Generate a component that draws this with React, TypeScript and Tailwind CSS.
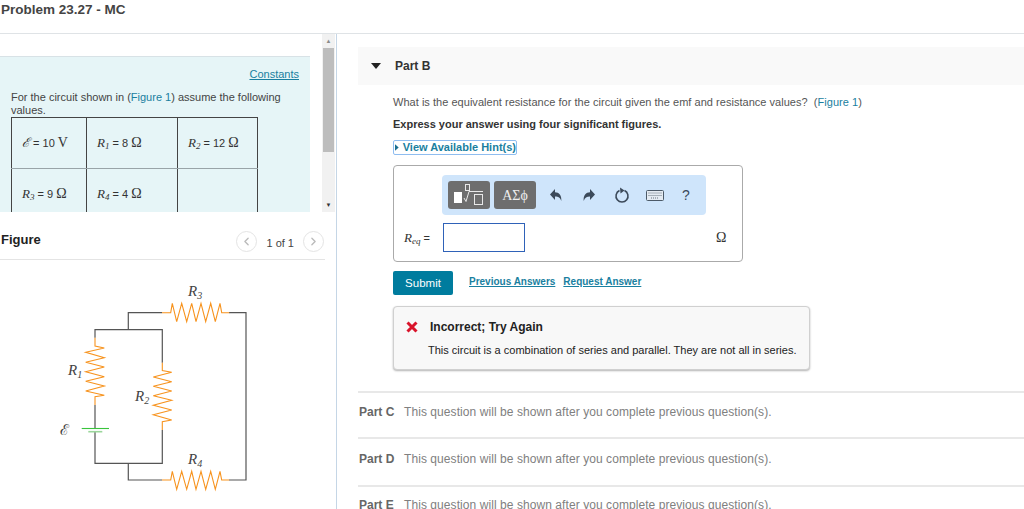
import React from 'react';
import { ChevronLeft, ChevronRight } from 'lucide-react';

const serif = "font-['Liberation_Serif',serif]";

const Sym = ({ name, sub }: { name: string; sub?: string }) => (
    <span className={`${serif} text-[13px] italic text-[#333]`}>
        {name}
        {sub && <sub className="text-[9px] leading-none">{sub}</sub>}
    </span>
);

const Cell = ({ name, sub, value, unit }: { name?: string; sub?: string; value?: string; unit?: string }) => (
    <td className="border border-[#444] pb-[2px] pl-[10px] align-middle text-[11px] text-[#333]">
        {name && (
            <>
                <Sym name={name} sub={sub} /> = {value} <span className={`${serif} text-[14px]`}>{unit}</span>
            </>
        )}
    </td>
);

const Circuit = () => (
    <svg width="336" height="249" viewBox="0 260 336 249" className="block">
        <g fill="none" stroke="#555" strokeWidth="1.2">
            <path d="M162 312.7H128.3V329.7M229 312.7H246V480H229M162 480H128.3V463.3" />
            <path d="M95 337.7V329.7H162.3V362.7M162.3 430V463.3H95V431.7M95 405V428.3" />
        </g>
        <g fill="none" stroke="#f7931e" strokeWidth="1.1">
            <path d="M162 312.7H170.7L172.3 303.3L176.7 321.7L181.7 303.3L186.7 321.7L191.7 303.3L196 321.7L201 303.3L205.7 321.7L210.7 303.3L215.3 321.7L220 303.3L221.7 312.7H229.3" />
            <path d="M162 480H170.7L172.3 471.3L176.7 489.3L181.7 471.3L186.7 489.3L191.7 471.3L196 489.3L201 471.3L205.7 489.3L210.7 471.3L215.3 489.3L220 471.3L221.7 480H229.3" />
            <path d="M95 337.7V346L104.3 348L85.7 352.3L104.3 357.7L85.7 362.3L104.3 367L85.7 371.7L104.3 376.7L85.7 381.3L104.3 386L85.7 391L104.3 395.3L95 396.7V405" />
            <path d="M162.3 362.7V370.5L171.7 372.3L153.3 377L171.7 381.7L153.3 386.3L171.7 391L153.3 395.7L171.7 400.3L153.3 405.3L171.7 410L153.3 414.7L171.7 420L162.3 421.7V430" />
        </g>
        <path d="M81.7 428.5H109" stroke="#39c43c" strokeWidth="1.1" fill="none" />
        <path d="M88.3 431.7H102.3" stroke="#9ad69b" strokeWidth="1.6" fill="none" />
        <g className={serif} fontSize="15" fill="#444" fontStyle="italic">
            <text x="188" y="296">R<tspan fontSize="10" dy="3">3</tspan></text>
            <text x="188" y="464">R<tspan fontSize="10" dy="3">4</tspan></text>
            <text x="68" y="375">R<tspan fontSize="10" dy="3">1</tspan></text>
            <text x="135" y="401">R<tspan fontSize="10" dy="3">2</tspan></text>
            <text x="60" y="435" fontSize="15" fontStyle="normal">ℰ</text>
        </g>
    </svg>
);

const Toolbar = () => (
    <div className="ml-[48px] mt-[9px] flex h-[40px] w-[264px] items-center rounded-[4px] bg-[#cfe5fb] pl-[6px]">
        <div className="flex h-[28px] w-[42px] items-center justify-center gap-[1px] rounded-[3px] bg-[#6e6e6e]">
            <div className="mt-[4px] h-[11px] w-[8px] bg-white" />
            <svg width="21" height="24" viewBox="0 0 21 24" fill="none" stroke="#e8e8e8" strokeWidth="1">
                <rect x="2.5" y="1.5" width="4" height="6" />
                <path d="M1 15L3 18.5L6 8.5H20" />
                <rect x="11.5" y="11.5" width="8" height="10" />
            </svg>
        </div>
        <div className={`${serif} ml-[4px] flex h-[28px] w-[42px] items-center justify-center rounded-[3px] bg-[#6e6e6e] text-[14px] text-[#eee]`}>
            ΑΣϕ
        </div>
        <svg className="ml-[13px]" width="14" height="14" viewBox="0 0 14 14" fill="#3c4a5a">
            <path d="M6 1V4.2C10 4.2 12.8 7 12.3 13C11 9.8 9.5 8.6 6 8.6V12L1 6.5Z" />
        </svg>
        <svg className="ml-[19px]" width="14" height="14" viewBox="0 0 14 14" fill="#3c4a5a">
            <path d="M8 1V4.2C4 4.2 1.2 7 1.7 13C3 9.8 4.5 8.6 8 8.6V12L13 6.5Z" />
        </svg>
        <svg className="ml-[18px]" width="16" height="16" viewBox="0 0 16 16" fill="none" stroke="#3c4a5a" strokeWidth="1.6">
            <path d="M5.5 3.6A6 6 0 1 0 10.5 3.6" />
            <path d="M6 0.5L10.5 3.4L6.5 6.5Z" fill="#3c4a5a" stroke="none" />
        </svg>
        <svg className="ml-[16px]" width="18" height="11" viewBox="0 0 18 11">
            <rect x="0.5" y="0.5" width="17" height="10" rx="1" fill="#e4ebf2" stroke="#4c5a68" />
            <path d="M2.5 3H15.5M2.5 5.5H15.5M5 8H13" stroke="#68747f" strokeWidth="1.2" strokeDasharray="1 1" />
        </svg>
        <span className="ml-[18px] text-[14px] text-[#3c4a5a]">?</span>
    </div>
);

const Locked = ({ part, className }: { part: string; className: string }) => (
    <div className={`flex border-t-2 border-[#e8e8e8] pl-[1px] text-[12px] ${className}`}>
        <span className="w-[45px] font-bold text-[#666]">{part}</span>
        <span className="tracking-[0.07px] text-[#808080]">This question will be shown after you complete previous question(s).</span>
    </div>
);

export default function App() {
    return (
        <div className="h-[509px] w-[1024px] overflow-hidden bg-white font-['Liberation_Sans',sans-serif]">
            <div className="h-[34px] border-b border-[#dfe3e6] pl-[1px] pt-[1px] text-[13.5px] font-bold leading-[18px] text-[#444]">
                Problem 23.27 - MC
            </div>
            <div className="flex">
                <div className="h-[475px] w-[337px] shrink-0 border-r border-[#c5d6e6]">
                    <div className="flex h-[178px]">
                        <div className="h-full w-[322px] overflow-hidden pt-[22px]">
                            <div className="h-[156px] w-[310px] overflow-hidden border-t border-[#d8e2e6] bg-[#e6f5f7]">
                                <div className="pr-[11px] pt-[10px] text-right text-[11px] leading-[14px]">
                                    <a className="text-[#1a7fa0] underline">Constants</a>
                                </div>
                                <p className="pl-[11px] pr-[20px] pt-[10px] text-[11px] leading-[13px] text-[#444]">
                                    For the circuit shown in (<span className="text-[#1a7fa0]">Figure 1</span>) assume the following values.
                                </p>
                                <table className="ml-[11px] w-[246px] table-fixed border-collapse">
                                    <colgroup>
                                        <col className="w-[75px]" />
                                        <col className="w-[91px]" />
                                        <col className="w-[80px]" />
                                    </colgroup>
                                    <tbody>
                                        <tr className="h-[51px] [&>td]:border-b-[#99a4a8]">
                                            <Cell name="ℰ" value="10" unit="V" />
                                            <Cell name="R" sub="1" value="8" unit="Ω" />
                                            <Cell name="R" sub="2" value="12" unit="Ω" />
                                        </tr>
                                        <tr className="h-[51px] [&>td]:border-t-[#99a4a8]">
                                            <Cell name="R" sub="3" value="9" unit="Ω" />
                                            <Cell name="R" sub="4" value="4" unit="Ω" />
                                            <Cell />
                                        </tr>
                                    </tbody>
                                </table>
                            </div>
                        </div>
                        <div className="flex h-full w-[13px] flex-col items-center bg-[#f1f1f1]">
                            <div className="flex h-[14px] items-center text-[6px] text-[#8a8a8a]">▲</div>
                            <div className="h-[104px] w-[11px] bg-[#bdbdbd]" />
                            <div className="mt-auto flex h-[14px] items-center text-[6px] text-[#333]">▼</div>
                        </div>
                    </div>
                    <div className="flex h-[48px] w-[325px] items-center justify-between border-b border-[#e4e4e4] pt-[8px]">
                        <span className="pl-[1px] text-[13px] font-bold text-[#222]">Figure</span>
                        <div className="mr-[1px] mt-[4px] flex items-center gap-[9px] text-[11px] text-[#444]">
                            <div className="flex h-[21px] w-[21px] items-center justify-center rounded-full border border-[#e4e4e4] text-[#bbb]">
                                <ChevronLeft size={13} strokeWidth={2.5} />
                            </div>
                            <span className="mt-[3px]">1 of 1</span>
                            <div className="flex h-[21px] w-[21px] items-center justify-center rounded-full border border-[#e4e4e4] text-[#bbb]">
                                <ChevronRight size={13} strokeWidth={2.5} />
                            </div>
                        </div>
                    </div>
                    <Circuit />
                </div>

                <div className="flex-1 pl-[21px] pt-[13px]">
                    <div className="flex h-[38px] items-center bg-[#f9f9f9] pl-[13px] text-[12px] font-bold text-[#333]">
                        <svg className="mr-[14px]" width="10" height="6" viewBox="0 0 10 6" fill="#222">
                            <path d="M0 0H10L5 6Z" />
                        </svg>
                        Part B
                    </div>
                    <div className="pl-[35px]">
                        <p className="mt-[10px] whitespace-pre text-[11px] leading-[14px] tracking-[0.03px] text-[#555]">
                            What is the equivalent resistance for the circuit given the emf and resistance values?  (<span className="text-[#1a7fa0]">Figure 1</span>)
                        </p>
                        <p className="mt-[8px] text-[11px] font-bold leading-[14px] text-[#333]">Express your answer using four significant figures.</p>
                        <div className="mt-[9px] flex h-[15px] w-[124px] items-center whitespace-nowrap rounded-[2px] border border-[#8fbdf0] text-[11px] font-bold text-[#1a7fa0]">
                            <svg className="ml-[1px] mr-[4px]" width="4" height="7" viewBox="0 0 4 7" fill="#1a6f90">
                                <path d="M0 0L4 3.5L0 7Z" />
                            </svg>
                            View Available Hint(s)
                        </div>
                        <div className="mt-[10px] h-[97px] w-[350px] rounded-[4px] border border-[#aaa]">
                            <Toolbar />
                            <div className="mt-[8px] flex items-center pl-[10px]">
                                <span className="w-[39px] text-[11px] text-[#333]">
                                    <Sym name="R" sub="eq" /> =
                                </span>
                                <div className="h-[29px] w-[82px] border border-[#2f62b8]" />
                                <span className={`${serif} ml-[191px] text-[14px] text-[#333]`}>Ω</span>
                            </div>
                        </div>
                        <div className="mt-[9px] flex items-center">
                            <div className="flex h-[24px] w-[60px] items-center justify-center rounded-[2px] bg-[#007c9e] pt-[1px] text-[11.5px] text-white">Submit</div>
                            <a className="mb-[4px] ml-[16px] text-[10px] font-bold text-[#1a7fa0] underline">Previous Answers</a>
                            <a className="mb-[4px] ml-[8px] text-[10px] font-bold text-[#1a7fa0] underline">Request Answer</a>
                        </div>
                        <div className="mt-[11px] h-[64px] w-[417px] rounded-[4px] border border-[#d0d0d0] bg-[#f8f8f8] pl-[12px] pt-[11px] shadow-[0_1px_2px_rgba(0,0,0,0.3)]">
                            <div className="flex items-center text-[12px] font-bold text-[#222]">
                                <svg className="mr-[12px]" width="12" height="12" viewBox="0 0 12 12" stroke="#d9142b" strokeWidth="3">
                                    <path d="M1.5 1.5L10.5 10.5M10.5 1.5L1.5 10.5" />
                                </svg>
                                Incorrect; Try Again
                            </div>
                            <p className="mt-[7px] pl-[22px] text-[11px] leading-[14px] text-[#222]">
                                This circuit is a combination of series and parallel. They are not all in series.
                            </p>
                        </div>
                    </div>
                    <div className="mt-[21px]">
                        <Locked part="Part C" className="h-[46px] items-center pb-[6px]" />
                        <Locked part="Part D" className="h-[48px] items-center pb-[6px]" />
                        <Locked part="Part E" className="h-[24px] pt-[9px]" />
                    </div>
                </div>
            </div>
        </div>
    );
}
